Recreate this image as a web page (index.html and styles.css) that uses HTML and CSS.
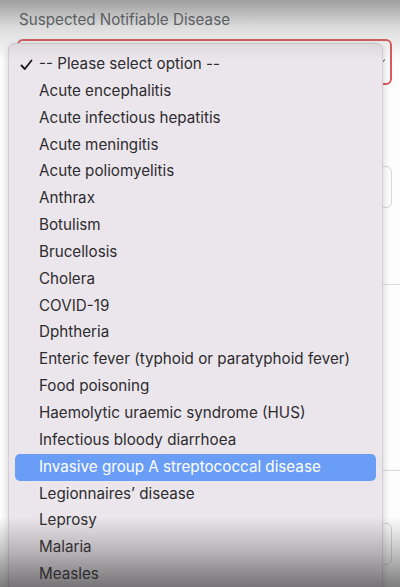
FILE: index.html
```html
<!DOCTYPE html>
<html>
<head>
<meta charset="utf-8">
<link rel="stylesheet" href="styles.css">
</head>
<body>
<div class="page">
  <div class="form">
    <div class="label">Suspected Notifiable Disease</div>
    <div class="select"><span class="chev"></span></div>
    <div class="field f1"></div>
    <div class="rule r1"></div>
    <div class="rule r2"></div>
    <div class="field f2"></div>
  </div>
  <div class="menu">
    <div class="opt checked"><svg class="check" width="13" height="12" viewBox="0 0 13 12"><path d="M1.5 6.5 L4.8 10 L11.5 1.5" fill="none" stroke="#1e1e1e" stroke-width="1.9" stroke-linecap="round" stroke-linejoin="round"/></svg>-- Please select option --</div>
    <div class="opt">Acute encephalitis</div>
    <div class="opt">Acute infectious hepatitis</div>
    <div class="opt">Acute meningitis</div>
    <div class="opt">Acute poliomyelitis</div>
    <div class="opt">Anthrax</div>
    <div class="opt">Botulism</div>
    <div class="opt">Brucellosis</div>
    <div class="opt">Cholera</div>
    <div class="opt">COVID-19</div>
    <div class="opt">Dphtheria</div>
    <div class="opt">Enteric fever (typhoid or paratyphoid fever)</div>
    <div class="opt">Food poisoning</div>
    <div class="opt">Haemolytic uraemic syndrome (HUS)</div>
    <div class="opt">Infectious bloody diarrhoea</div>
    <div class="opt active">Invasive group A streptococcal disease</div>
    <div class="opt">Legionnaires’ disease</div>
    <div class="opt">Leprosy</div>
    <div class="opt">Malaria</div>
    <div class="opt">Measles</div>
  </div>
  <div class="shade-top"></div>
  <div class="shade-bottom"></div>
</div>
</body>
</html>
```
FILE: styles.css
```css
html, body {
  margin: 0;
  padding: 0;
}
body {
  background: #fdfdfd;
  font-family: Inter, "Liberation Sans", sans-serif;
  width: 400px;
  height: 587px;
  overflow: hidden;
}
.page {
  position: relative;
  width: 400px;
  height: 587px;
  overflow: hidden;
}
.form {
  padding: 10px 8px 0 17px;
  display: flex;
  flex-direction: column;
}
.label {
  font-size: 15.2px;
  color: #555a60;
  padding-left: 2px;
  height: 29px;
  line-height: 20px;
}
.select {
  height: 42px;
  border: 2px solid #dc5a5a;
  border-radius: 6px;
  position: relative;
}
.chev {
  position: absolute;
  right: 6px;
  top: 16px;
  width: 5px;
  height: 5px;
  border-right: 1.5px solid #666;
  border-bottom: 1.5px solid #666;
  transform: rotate(45deg);
}
.field {
  border: 1px solid #d6d6d6;
  border-radius: 6px;
  height: 40px;
}
.f1 { margin-top: 81px; }
.rule {
  border-top: 1px solid #dcdcdc;
  margin-right: -8px;
}
.r1 { margin-top: 76px; }
.r2 { margin-top: 185px; }
.f2 { margin-top: 52px; }
.menu {
  position: absolute;
  left: 8px;
  top: 43px;
  width: 375px;
  height: 600px;
  background: #ebe6eb;
  border: 1px solid #d2ced2;
  border-radius: 7px;
  box-shadow: 0 2px 8px rgba(0,0,0,0.18);
  padding: 7px 6px 0 6px;
  box-sizing: border-box;
}
.opt {
  height: 26.85px;
  line-height: 26.85px;
  font-size: 15.2px;
  color: #2e2c2f;
  padding-left: 24px;
  border-radius: 5px;
  white-space: nowrap;
  position: relative;
  margin-right: 0;
}
.opt.active {
  background: #6a9ef6;
  color: #ffffff;
}
.check {
  position: absolute;
  left: 5px;
  top: 8px;
}
.shade-top {
  position: absolute;
  left: 0;
  top: 0;
  width: 400px;
  height: 60px;
  background: linear-gradient(to bottom, rgba(80,80,80,0.55) 0%, rgba(120,120,120,0.25) 45%, rgba(255,255,255,0) 100%);
  pointer-events: none;
}
.shade-bottom {
  position: absolute;
  left: 0;
  bottom: 0;
  width: 400px;
  height: 70px;
  background: linear-gradient(to bottom, rgba(60,60,60,0) 0%, rgba(60,60,60,0.3) 50%, rgba(40,40,40,0.6) 100%);
  pointer-events: none;
}
```
